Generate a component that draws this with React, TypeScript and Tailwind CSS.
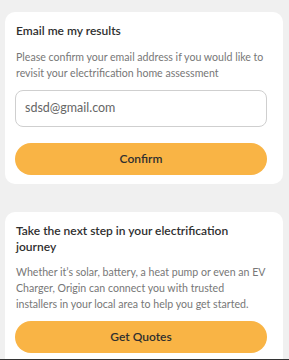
export default function App() {
  return (
    <div className="min-h-[360px] bg-[#f0f0f0] pl-[5px] pr-[6px] pt-[12px] font-['Lato',sans-serif] text-[#333]">
      <div className="rounded-[10px] bg-white pl-[10px] pr-[16px] pt-[11px] pb-[9px]">
        <h2 className="px-[1px] text-[12px] font-semibold leading-[16px] text-[#2f2f2f]">Email me my results</h2>
        <p className="mt-[10px] px-[1px] text-[10.6px] leading-[16px] text-[#777]">
          Please confirm your email address if you would like to revisit your electrification home assessment
        </p>
        <div className="mt-[9px] flex h-[37px] items-center rounded-[8px] border border-[#cfcfcf] px-[9px] text-[12.5px] text-[#666]">
          sdsd@gmail.com
        </div>
        <button className="mt-[16px] h-[32px] w-full rounded-full bg-[#f9b445] text-[12px] font-semibold text-[#2f2f2f]">
          Confirm
        </button>
      </div>
      <div className="mt-[28px] rounded-t-[10px] bg-white pl-[10px] pr-[16px] pt-[11px] pb-[8px]">
        <h2 className="px-[1px] text-[12px] font-semibold leading-[16px] text-[#2f2f2f]">
          Take the next step in your electrification journey
        </h2>
        <p className="mt-[9px] px-[1px] text-[10.6px] leading-[16px] text-[#777]">
          Whether it’s solar, battery, a heat pump or even an EV Charger, Origin can connect you with trusted installers in your local area to help you get started.
        </p>
        <button className="mt-[9px] h-[32px] w-full rounded-full bg-[#f9b445] text-[12px] font-semibold text-[#2f2f2f]">
          Get Quotes
        </button>
      </div>
      <div className="fixed bottom-0 left-0 h-px w-full bg-[#333]" />
    </div>
  );
}
